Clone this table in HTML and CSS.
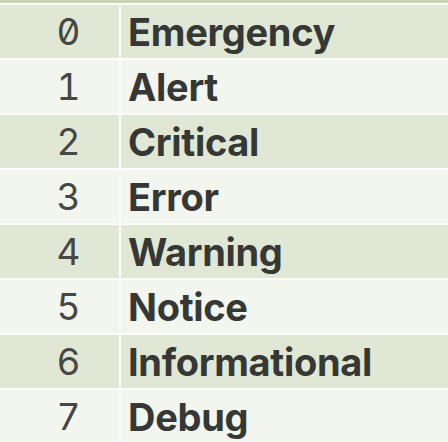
FILE: index.html
```
<!DOCTYPE html>
<html>
<head>
<meta charset="utf-8">
<link rel="stylesheet" href="styles.css">
</head>
<body>
<div class="levels">
  <div class="row odd"><div class="num">0</div><div class="name">Emergency</div></div>
  <div class="row"><div class="num">1</div><div class="name">Alert</div></div>
  <div class="row odd"><div class="num">2</div><div class="name">Critical</div></div>
  <div class="row"><div class="num">3</div><div class="name">Error</div></div>
  <div class="row odd"><div class="num">4</div><div class="name">Warning</div></div>
  <div class="row"><div class="num">5</div><div class="name">Notice</div></div>
  <div class="row odd"><div class="num">6</div><div class="name">Informational</div></div>
  <div class="row"><div class="num">7</div><div class="name">Debug</div></div>
</div>
</body>
</html>
```
FILE: styles.css
```
html, body {
  margin: 0;
  padding: 0;
  background: #f3f6ef;
  overflow: hidden;
}
.levels {
  border-top: 3px solid #c9d6b1;
  width: 448px;
}
.row {
  display: grid;
  grid-template-columns: 119px 1fr;
  column-gap: 2px;
  height: 55px;
  border-top: 2px solid #fbfcf9;
  box-sizing: border-box;
  background: #fbfcf9;
}
.row > div {
  background: #f3f6ef;
  display: flex;
  align-items: center;
}
.row.odd > div {
  background: #e0e8d5;
}
.num {
  justify-content: center;
  padding-left: 18px;
  font-family: Inter, sans-serif;
  font-feature-settings: "tnum", "zero";
  font-size: 37px;
  font-weight: 400;
  color: #454745;
}
.name {
  padding-left: 7px;
  font-family: Inter, sans-serif;
  font-weight: 700;
  font-size: 38px;
  letter-spacing: -0.3px;
  color: #363836;
}
```
